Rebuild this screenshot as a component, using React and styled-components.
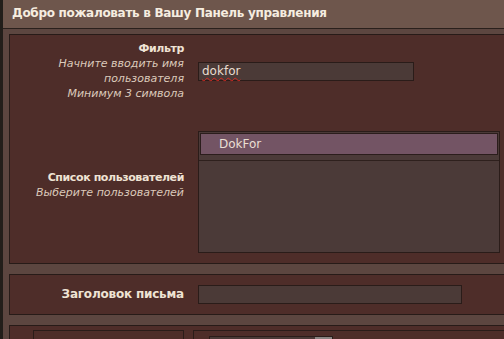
import React from 'react';
import styled, { createGlobalStyle } from 'styled-components';

const GlobalStyle = createGlobalStyle`
  html, body {
    margin: 0;
    padding: 0;
    overflow: hidden;
    background: #5c4640;
  }
  body {
    font-family: "DejaVu Sans", Verdana, sans-serif;
  }
`;

const Page = styled.div`
  display: flex;
  width: 760px;
  min-height: 339px;
  background: #5c4640;
`;

const Rail = styled.div`
  flex: none;
  width: 3px;
  background: #221e1a;
`;

const Main = styled.div`
  flex: 1;
  display: flex;
  flex-direction: column;
`;

const Header = styled.h1`
  margin: 0;
  height: 28px;
  padding-left: 9px;
  background: #6e564c;
  border-bottom: 1px solid #2a201c;
  color: #f6ede0;
  font-size: 12px;
  font-weight: bold;
  letter-spacing: -0.3px;
  line-height: 26px;
  white-space: nowrap;
`;

const Content = styled.div`
  padding: 5px 0 0 6px;
`;

const Panel = styled.section`
  background: #4e2d29;
  border: 1px solid #271b18;
  margin-bottom: 10px;
  padding: ${p => p.$pad || '0'};
`;

const FieldRow = styled.div`
  display: grid;
  grid-template-columns: 174px 1fr;
  column-gap: 14px;
  align-items: center;
  margin-top: ${p => p.$top || 0}px;
`;

const Label = styled.div`
  text-align: right;
  font-size: 11px;
  line-height: 15px;
  padding-bottom: ${p => p.$shift || 0}px;
`;

const Title = styled.div`
  font-weight: bold;
  font-size: ${p => p.$size || 11}px;
  letter-spacing: ${p => (p.$size ? '-0.2px' : '-0.4px')};
  color: #efe3d4;
`;

const Hint = styled.div`
  font-style: italic;
  color: #dccabb;
`;

const TextBox = styled.div`
  box-sizing: border-box;
  width: ${p => p.$w}px;
  height: 19px;
  padding: 0 3px;
  background: #4b3a37;
  border: 1px solid #2a1c19;
  color: #e9ddd0;
  font-size: 12px;
  line-height: 17px;
`;

const Misspelled = styled.span`
  text-decoration: underline wavy #d62a22;
  text-decoration-thickness: 1px;
  text-underline-offset: 2px;
`;

const ListBox = styled.div`
  box-sizing: border-box;
  width: 302px;
  height: 122px;
  background: #4b3a38;
  border: 1px solid #2a1c19;
`;

const ListHead = styled.div`
  padding: 1px 1px 5px 1px;
  border-bottom: 1px solid #2e201d;
`;

const Option = styled.div`
  box-sizing: border-box;
  height: 22px;
  padding-left: 18px;
  background: #735464;
  border: 1px solid #2b1d1c;
  color: #eadfd3;
  font-size: 12px;
  line-height: 20px;
`;

const SubRow = styled.div`
  display: flex;
  gap: 9px;
  padding: 4px 0 0 23px;
`;

const SubBox = styled.div`
  box-sizing: border-box;
  width: ${p => (p.$w ? `${p.$w}px` : 'auto')};
  flex: ${p => (p.$w ? 'none' : '1')};
  height: 40px;
  border: 1px solid #2a1c19;
  padding: 5px 0 0 15px;
  font-size: 11px;
  line-height: 15px;
  text-align: ${p => (p.$w ? 'center' : 'left')};
`;

const SubTitle = styled(Title)`
  padding-top: 1px;
  margin-left: -15px;
`;

const Select = styled.div`
  display: flex;
  justify-content: flex-end;
  box-sizing: border-box;
  width: 124px;
  height: 20px;
  background: #4b3a37;
  border: 1px solid #2a1c19;
`;

const SelectButton = styled.div`
  width: 17px;
  background: #8a8583;
`;

export default function App() {
  return (
    <>
      <GlobalStyle />
      <Page>
        <Rail />
        <Main>
          <Header>Добро пожаловать в Вашу Панель управления</Header>
          <Content>
            <Panel $pad="6px 0 10px 0">
              <FieldRow>
                <Label>
                  <Title>Фильтр</Title>
                  <Hint>Начните вводить имя</Hint>
                  <Hint>пользователя</Hint>
                  <Hint>Минимум 3 символа</Hint>
                </Label>
                <TextBox $w={216}>
                  <Misspelled>dokfor</Misspelled>
                </TextBox>
              </FieldRow>
              <FieldRow $top={30}>
                <Label $shift={14}>
                  <Title>Список пользователей</Title>
                  <Hint>Выберите пользователей</Hint>
                </Label>
                <ListBox>
                  <ListHead>
                    <Option>DokFor</Option>
                  </ListHead>
                </ListBox>
              </FieldRow>
            </Panel>
            <Panel $pad="10px 0 10px 0">
              <FieldRow>
                <Label>
                  <Title $size={12}>Заголовок письма</Title>
                </Label>
                <TextBox $w={264} />
              </FieldRow>
            </Panel>
            <Panel>
              <SubRow>
                <SubBox $w={151}>
                  <SubTitle>Свойства</SubTitle>
                </SubBox>
                <SubBox>
                  <Select>
                    <SelectButton />
                  </Select>
                </SubBox>
              </SubRow>
            </Panel>
          </Content>
        </Main>
      </Page>
    </>
  );
}
